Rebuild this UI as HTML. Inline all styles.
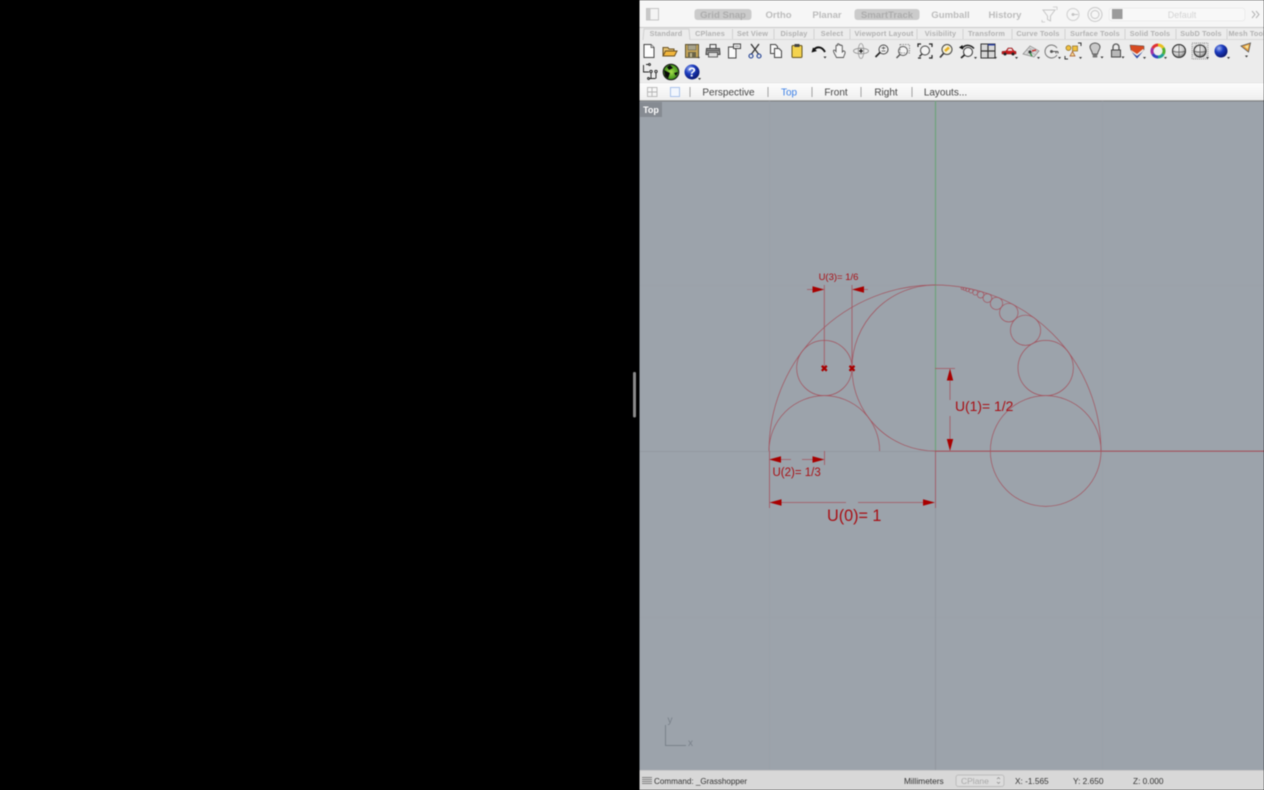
<!DOCTYPE html>
<html lang="en"><head><meta charset="utf-8"><title>Rhino Top Viewport</title>
<style>
html,body{margin:0;padding:0;width:1264px;height:790px;overflow:hidden;background:#000}
svg{position:absolute;left:0;top:0;display:block;filter:blur(.45px)}
text{font-family:"Liberation Sans",sans-serif}
.top{font-size:9.6px;font-weight:bold;fill:#bcbcbc;text-anchor:middle}
.tab{font-size:7.3px;font-weight:bold;fill:#b2b2b2;text-anchor:middle;letter-spacing:.15px}
.vt{font-size:10px;fill:#444;text-anchor:middle}
.st{font-size:8.3px;fill:#333}
.d{fill:#a80f14}
.l{stroke:#a3545f;stroke-width:.72;fill:none}
.dl{stroke:#a5545f;stroke-width:.8;fill:none}
.a{fill:#a80000}
.dd{fill:#333}
</style></head><body>
<svg width="1264" height="790" viewBox="0 0 1264 790" xmlns="http://www.w3.org/2000/svg">
<defs>
<radialGradient id="bs" cx=".35" cy=".3" r=".8"><stop offset="0" stop-color="#9fb4f0"/><stop offset=".4" stop-color="#1c3cc0"/><stop offset="1" stop-color="#071060"/></radialGradient>
<radialGradient id="gs" cx=".4" cy=".35" r=".75"><stop offset="0" stop-color="#f4f4f4"/><stop offset=".6" stop-color="#c8c8c8"/><stop offset="1" stop-color="#555"/></radialGradient>
<radialGradient id="gl" cx=".5" cy=".5" r=".6"><stop offset="0" stop-color="#a6e04a"/><stop offset=".7" stop-color="#4a9a20"/><stop offset="1" stop-color="#123a0a"/></radialGradient>
<linearGradient id="vb" x1="0" y1="0" x2="0" y2="1"><stop offset="0" stop-color="#fdfdfd"/><stop offset="1" stop-color="#eeeeee"/></linearGradient>
</defs>

<rect width="640" height="790" fill="#000"/>
<rect x="633" y="372" width="3" height="45.500" rx="1.200" fill="#8a8a8a"/>

<!-- top bar -->
<rect x="639.500" y="0" width="625" height="27" fill="#f6f6f6"/>
<rect x="639.500" y="27" width="625" height="1" fill="#c9c9c9"/>
<rect x="646.500" y="8.500" width="12" height="11.500" fill="#f4f4f4" stroke="#c4c4c4"/>
<rect x="647" y="9" width="3.500" height="10.500" fill="#c8c8c8"/>
<rect x="694.500" y="9" width="57" height="11" rx="3" fill="#cbcbcb"/>
<text class="top" x="723" y="18" style="fill:#adadad">Grid Snap</text>
<text class="top" x="778.500" y="18">Ortho</text>
<text class="top" x="827" y="18">Planar</text>
<rect x="854.500" y="9" width="65" height="11" rx="3" fill="#cbcbcb"/>
<text class="top" x="887" y="18" style="fill:#adadad">SmartTrack</text>
<text class="top" x="950.500" y="18">Gumball</text>
<text class="top" x="1005" y="18">History</text>
<path d="M1043 10h12l-4.500 6v5l-3-1.500v-3.500z" fill="none" stroke="#c6c6c6"/>
<path d="M1053 7h4v3M1042 20v2h3" fill="none" stroke="#c6c6c6" stroke-width=".8"/>
<circle cx="1073" cy="14.500" r="6" fill="none" stroke="#cfcfcf"/><circle cx="1073" cy="14.500" r="1.500" fill="#c4c4c4"/><path d="M1073 14.500h5" stroke="#c4c4c4"/>
<circle cx="1095" cy="14.500" r="7" fill="none" stroke="#c8c8c8"/><circle cx="1095" cy="14.500" r="4" fill="none" stroke="#c8c8c8"/>
<rect x="1109" y="8" width="136" height="13" rx="3" fill="#f8f8f8" stroke="#ececec"/>
<rect x="1112" y="9" width="10.500" height="10" fill="#9b9b9b"/>
<text x="1182" y="18" font-size="9" fill="#d4d4d4" text-anchor="middle">Default</text>
<path d="M1252 11l3 3.500-3 3.500M1256 11l3 3.500-3 3.500" fill="none" stroke="#b4b4b4"/>

<!-- tabs -->
<rect x="639.500" y="28" width="625" height="55" fill="#ececec"/>
<path d="M643 40l1-11h45l1 11M732.500 40v-11M774 40v-11M814 40v-11M850 40v-11M917 40v-11M963 40v-11M1012 40v-11M1065 40v-11M1125 40v-11M1176 40v-11M1227 40v-11" fill="none" stroke="#d0d0d0"/>
<path d="M690 39.500H1264" stroke="#dadada"/>
<text class="tab" x="666" y="36">Standard</text>
<text class="tab" x="710" y="36">CPlanes</text>
<text class="tab" x="752.500" y="36">Set View</text>
<text class="tab" x="794" y="36">Display</text>
<text class="tab" x="832" y="36">Select</text>
<text class="tab" x="884" y="36">Viewport Layout</text>
<text class="tab" x="940.500" y="36">Visibility</text>
<text class="tab" x="986.500" y="36">Transform</text>
<text class="tab" x="1038" y="36">Curve Tools</text>
<text class="tab" x="1095" y="36">Surface Tools</text>
<text class="tab" x="1150" y="36">Solid Tools</text>
<text class="tab" x="1201" y="36">SubD Tools</text>
<text class="tab" x="1249" y="36">Mesh Tools</text>

<!-- toolbar row 1 -->
<g transform="translate(649,51)"><path d="M-5-6.500h7l3 3V6.500H-5z" fill="#fdfdfd" stroke="#444"/><path d="M2-6.500v3h3" fill="#ddd" stroke="#444" stroke-width=".7"/></g>
<g transform="translate(670,51)"><path d="M-7 4.500V-3.500h5l1 1.500h5v2" fill="#e4c170" stroke="#6a5020"/><path d="M-7 5l2.500-5H7L4.500 5z" fill="#f2b63c" stroke="#6a5020"/></g>
<g transform="translate(692,51)"><rect x="-6.500" y="-6.500" width="13" height="13" fill="#c8a758" stroke="#5c5232"/><rect x="-4" y="-6" width="8" height="5" fill="#a8a48c" stroke="#555"  stroke-width=".5"/><rect x="-4" y="1" width="8" height="5.500" fill="#6a6448"/><rect x="-2" y="2" width="2" height="4" fill="#c0b890"/><path d="M5.500 6h2.500l-1.200 1.500z" class="dd"/></g>
<g transform="translate(713,51)"><path d="M-3-6.500h6v4h-6z" fill="#eee" stroke="#444"/><path d="M-6.500-2.500h13l.5 6h-14z" fill="#9a9a9a" stroke="#444"/><rect x="-4.500" y="1.500" width="9" height="4.500" fill="#ddd" stroke="#444" stroke-width=".8"/><path d="M-6-.5h12" stroke="#555"/></g>
<g transform="translate(734,51)"><path d="M-5.500-4h5l2.500 2.500V7h-7.500z" fill="#fafafa" stroke="#444"/><rect x="-.5" y="-7" width="7" height="4.500" fill="#fafafa" stroke="#444"/><path d="M1-4.800h4" stroke="#888"/></g>
<g transform="translate(755,51)"><path d="M-4-7L3.500 3M4-7L-3.500 3" stroke="#333" stroke-width="1.300" fill="none"/><circle cx="-4" cy="5" r="2" fill="none" stroke="#1c3c90" stroke-width="1.100"/><circle cx="4" cy="5" r="2" fill="none" stroke="#1c3c90" stroke-width="1.100"/></g>
<g transform="translate(776,51)"><path d="M-5.500-6.500h5l2 2v7h-7z" fill="#f8f8f8" stroke="#444"/><path d="M-1.500-2.500h4.500l2.500 2.500v6.500h-7z" fill="#f8f8f8" stroke="#444"/></g>
<g transform="translate(797,51)"><rect x="-5" y="-5.500" width="10" height="12" rx="1" fill="#f4d34e" stroke="#665520"/><rect x="-2.500" y="-7" width="5" height="3" fill="#444"/></g>
<g transform="translate(819,51)"><path d="M-5.500-1C-2-5 3-4.500 6 1" fill="none" stroke="#111" stroke-width="1.900"/><path d="M-7.500 1.500l1.500-5 4 3.500z" fill="#111"/><path d="M4.500 5.500h3l-1.500 2z" class="dd"/></g>
<g transform="translate(840,51)"><path d="M-3.500 6.500C-5 3-7 1-6.500-.5c.5-.8 1.500-.5 2.500 1V-5c0-1 1.500-1 1.500 0v-1.500c0-1 1.700-1 1.700 0V-5.500c0-1 1.600-1 1.600 0V-5c0-1 1.500-1 1.500 0V1c1-1 1.500-1.500 1.800-1C6.500 1 4 4 3.500 6.500z" fill="#f4f4f4" stroke="#555" stroke-width=".9"/></g>
<g transform="translate(861,51)"><ellipse rx="7.500" ry="2.800" fill="none" stroke="#888" stroke-width=".8"/><ellipse rx="2.800" ry="7.500" fill="none" stroke="#999" stroke-width=".8"/><path d="M-2 0h4M0-2v4" stroke="#222" stroke-width="1.300"/></g>
<g transform="translate(882,51)"><circle cx="1.500" cy="-1.500" r="4.500" fill="#f4f4f4" stroke="#444"/><path d="M-2 1.500-6.500 6" stroke="#222" stroke-width="1.600"/><path d="M-.5-3h4M1.500-4.500v3M-.5 0h4" stroke="#444" stroke-width=".7"/></g>
<g transform="translate(903,51)"><circle cx="0" cy="0" r="4.500" fill="#f4f4f4" stroke="#555"/><path d="M-3 3.500-6.500 7" stroke="#555" stroke-width="1.400"/><rect x="-3" y="-6.500" width="9.500" height="8.500" fill="none" stroke="#777" stroke-width=".8" stroke-dasharray="1.500 1"/></g>
<g transform="translate(925,51)"><circle cx="0" cy="-.5" r="4.500" fill="#f4f4f4" stroke="#444"/><path d="M-3 3-5.500 5.500" stroke="#333" stroke-width="1.400"/><path d="M-7-4v-3h3M4-7h3v3M7 4v3H4M-4 7h-3" fill="none" stroke="#222" stroke-width="1.200"/></g>
<g transform="translate(946,51)"><circle cx="1" cy="-1.500" r="5" fill="#f5f1d8" stroke="#444"/><path d="M-2.500 2.500-6 6.500" stroke="#333" stroke-width="1.700"/><path d="M-1 0 3-3.500" stroke="#e8b020" stroke-width="2.500"/></g>
<g transform="translate(967,51)"><circle cx="1" cy="1" r="4.500" fill="#f4f4f4" stroke="#333"/><path d="M-2.500 4-6 7" stroke="#222" stroke-width="1.700"/><path d="M-5-2C-3-6.500 3-7 7-2.500" fill="none" stroke="#222" stroke-width="1.500"/><path d="M-8-3.500-4.500-6-4-1.500z" fill="#111"/><path d="M7 6h3l-1.500 2z" class="dd"/></g>
<g transform="translate(988,51)"><rect x="-7" y="-7" width="14" height="14" fill="#d8d8d8" stroke="#333"/><path d="M0-7V7M-7 0H7" stroke="#333" stroke-width="1.200"/><rect x="0" y="-7" width="7" height="1.500" fill="#2a3fa0"/><path d="M6 6h3l-1.500 2z" class="dd"/></g>
<g transform="translate(1009,51)"><path d="M-7 3V.5L-3 0-1-3H3L5 0 7 .5V3z" fill="#c8191c" stroke="#7a1010" stroke-width=".5"/><path d="M-.5-2.200H2.500L3.500-.3H-1.500z" fill="#eee"/><circle cx="-4" cy="3" r="1.500" fill="#222"/><circle cx="4" cy="3" r="1.500" fill="#222"/><path d="M6 6h3l-1.500 2z" class="dd"/></g>
<g transform="translate(1031,51)"><path d="M-8 3-1-5 8 0 3 6z" fill="#d8d8d8" stroke="#888" stroke-width=".7"/><path d="M-4.500-1 5 4M-2-3 6.500 1M-4 3.500l4-6M-1 5 3-1.500" stroke="#999" stroke-width=".5"/><circle cx="-1" cy="1" r="1.500" fill="#333"/><path d="M1 0 5-1" stroke="#c22" stroke-width="1.300"/><path d="M-1 2l2 3" stroke="#2a8a3a" stroke-width="1.200"/><path d="M6 6h3l-1.500 2z" class="dd"/></g>
<g transform="translate(1052,51)"><path d="M5-3A6.500 6.500 0 1 0 5 4" fill="none" stroke="#777"/><circle cx="-.5" cy=".5" r="1.500" fill="#555"/><path d="M-.5 .5H6M4 .5V2.500M6 .5V2.500" stroke="#555"/><path d="M6 6h3l-1.500 2z" class="dd"/></g>
<g transform="translate(1073,51)"><rect x="-.5" y="-5" width="5" height="5" fill="#f0c040" stroke="#8a6a20" stroke-width=".7"/><circle cx="-4.500" cy="-3" r="2.500" fill="#f0c040" stroke="#8a6a20" stroke-width=".7"/><path d="M-3 5l2.500-4.500L2 5z" fill="#f4d890" stroke="#a05020" stroke-width=".7"/><path d="M5-8h3v3M-8 5v3h3" fill="none" stroke="#333"/><path d="M6 6h3l-1.500 2z" class="dd"/></g>
<g transform="translate(1095,51)"><path d="M-2.500 3C-3-.5-5-1.500-5-4a5 4 0 0 1 10 0C5-1.500 3-.5 2.500 3z" fill="#c9c9c9" stroke="#555"/><rect x="-2.300" y="3" width="4.600" height="3.500" fill="#777"/><path d="M5.500 5.500h3l-1.500 2z" class="dd"/></g>
<g transform="translate(1116,51)"><path d="M-3-1V-4a3 3 0 0 1 6 0V-1" fill="none" stroke="#555" stroke-width="1.300"/><rect x="-4.500" y="-1" width="9" height="7" fill="#b8b8b8" stroke="#444"/><path d="M5.500 5.500h3l-1.500 2z" class="dd"/></g>
<g transform="translate(1137,51)"><path d="M-7-6 7-5V-1L0 6-6-.5z" fill="#d84a20" stroke="#444" stroke-width=".5"/><path d="M-6-1 0 3 6-2 7-1 0 6-6-.5z" fill="#eee"/><path d="M-5 1.500 0 5 5.500 1 0 7.500z" fill="#2844a0"/><path d="M6 6h3l-1.500 2z" class="dd"/></g>
<g transform="translate(1158,51)" fill="none" stroke-width="3"><path d="M0-6A6 6 0 0 1 5.200-3" stroke="#e8c020"/><path d="M5.200-3A6 6 0 0 1 5.200 3" stroke="#50b030"/><path d="M5.200 3A6 6 0 0 1 0 6" stroke="#20a090"/><path d="M0 6A6 6 0 0 1-5.200 3" stroke="#3040c0"/><path d="M-5.200 3A6 6 0 0 1-5.200-3" stroke="#a030a0"/><path d="M-5.200-3A6 6 0 0 1 0-6" stroke="#e03030"/><circle r="3.800" fill="#eee" stroke="none"/><path d="M6 6h3l-1.500 2z" fill="#333" stroke="none"/></g>
<g transform="translate(1179,51)"><circle r="6.500" fill="url(#gs)" stroke="#222"/><path d="M0-6.500V6.500M-6.500 0C-3 1.500 3 1.500 6.500 0" fill="none" stroke="#555" stroke-width=".7"/></g>
<g transform="translate(1200,51)"><rect x="-8" y="-8" width="16" height="16" fill="#e2e2e2" stroke="#777" stroke-width=".7" stroke-dasharray="1 1"/><path d="M-8-4H8M-8 0H8M-8 4H8M-4-8V8M0-8V8M4-8V8" stroke="#888" stroke-width=".5" stroke-dasharray="1 1"/><circle r="6" fill="url(#gs)" stroke="#222"/><path d="M0-6V6M-6 0C-3 1.500 3 1.500 6 0" fill="none" stroke="#555" stroke-width=".7"/><path d="M6 6h3l-1.500 2z" class="dd"/></g>
<g transform="translate(1221,51)"><circle r="6.500" fill="url(#bs)"/><path d="M6 6h3l-1.500 2z" class="dd"/></g>
<g transform="translate(1246,49)"><path d="M-5-3 4.500-6 2.500 3z" fill="#e8a040" stroke="#555" stroke-width=".8"/><path d="M-1.500-2.500 2.500-4 1.800 0z" fill="#f8e8a0"/><path d="M-1 6.500h3l-1.500 2z" class="dd"/></g>

<!-- toolbar row 2 -->
<g transform="translate(650,72)" fill="none" stroke="#222" stroke-width=".9"><path d="M-6.500-7V0H-1M-4-7.500H-1M-1 6.500H5.500M1 1V6.500M6 1V6.500"/><circle cx="1" cy="-.5" r="1.200"/><circle cx="6" cy="-.5" r="1.200"/><circle cx="-.5" cy="-7.500" r="1"/><circle cx="-1.500" cy="6.500" r="1"/></g>
<g transform="translate(671,72)"><circle r="7.800" fill="url(#gl)" stroke="#111"/><path d="M-7-2-1 1-3 6.500-6 4zM-1-7l3 3-4 2-2-3zM3 1l4-1-2 4z" fill="#0a0a0a"/></g>
<g transform="translate(692,72)"><circle r="7.500" fill="url(#bs)"/><text x="0" y="4.500" font-size="13" font-weight="bold" fill="#fff" text-anchor="middle">?</text><path d="M6 6h3l-1.500 2z" class="dd"/></g>

<!-- viewport tab bar -->
<rect x="639.500" y="83" width="625" height="18" fill="url(#vb)"/>
<rect x="639.500" y="82.500" width="625" height=".7" fill="#e0e0e0"/>
<rect x="639.500" y="100.300" width="625" height="1" fill="#8e8e8e"/>
<g fill="none" stroke="#b4b4b4" stroke-width=".9"><rect x="647.500" y="87.500" width="9.500" height="9"/><path d="M652 87.500v9M647.500 92h9.500"/></g>
<rect x="670.500" y="87.500" width="9" height="9" fill="#f2f6fd" stroke="#a9c2ea"/>
<path d="M690 87v10M768 87v10M812 87v10M861 87v10M912 87v10" stroke="#8c8c8c" stroke-width=".8"/>
<text class="vt" x="728.500" y="95.500">Perspective</text>
<text class="vt" x="789" y="95.500" style="fill:#3a7fe6">Top</text>
<text class="vt" x="836" y="95.500">Front</text>
<text class="vt" x="886" y="95.500">Right</text>
<text class="vt" x="945.500" y="95.500">Layouts...</text>

<!-- viewport -->
<rect x="639.500" y="101.300" width="625" height="668.700" fill="#9ca3ab"/>
<path d="M769.500 101V770M1102.500 101V770M640 285.500H1264M640 617.500H1264" stroke="#98a0a8" stroke-width=".6"/>
<path d="M640 451.500H935" stroke="#90969e" stroke-width=".7"/>
<path d="M935.500 451V770" stroke="#8f959c" stroke-width=".8"/>
<path d="M935.500 101V451" stroke="#6fa47c" stroke-width="1.200"/>
<path d="M935 451.200H1264" stroke="#a63c48" stroke-width=".85"/>
<rect x="640" y="102" width="22" height="15" fill="#868b92"/>
<text x="651" y="113" font-size="9" font-weight="bold" fill="#fff" text-anchor="middle">Top</text>

<!-- geometry -->
<path class="l" d="M769 451A166 166 0 0 1 1101 451"/>
<path class="l" d="M935 285A83 83 0 0 0 935 451"/>
<path class="l" d="M769 451A55.330 55.330 0 0 1 879.670 451"/>
<circle class="l" cx="824.330" cy="368" r="27.670"/>
<g class="l">
<circle cx="1045.670" cy="451" r="55.330"/>
<circle cx="1045.670" cy="368" r="27.670"/>
<circle cx="1025.550" cy="330.270" r="15.090"/>
<circle cx="1008.780" cy="312.670" r="9.220"/>
<circle cx="996.480" cy="303.440" r="6.150"/>
<circle cx="987.420" cy="298.110" r="4.370"/>
<circle cx="980.570" cy="294.760" r="3.250"/>
<circle cx="975.240" cy="292.550" r="2.520"/>
<circle cx="971" cy="291" r="2"/>
<circle cx="967.550" cy="289.880" r="1.630"/>
<circle cx="964.690" cy="289.050" r="1.350"/>
<circle cx="962.290" cy="288.410" r="1.140"/>
</g>

<!-- U(3) -->
<path class="dl" d="M807 289.500H813M864 289.500H868M824.300 285V368M852 285V368"/>
<path class="a" d="M812.500 286.300 824.300 289.500 812.500 292.700zM864 286.300 852 289.500 864 292.700z"/>
<path d="M821.800 365.800l5 5M826.800 365.800l-5 5M849.500 365.800l5 5M854.500 365.800l-5 5" stroke="#a80000" stroke-width="2.200"/>
<text class="d" x="838.500" y="280" font-size="9.500" text-anchor="middle">U(3)= 1/6</text>

<!-- U(2) -->
<path class="dl" d="M781 459.500H791M802 459.500H813M824.500 451V465"/>
<path class="a" d="M769 459.500 781 456.300V462.700zM824.500 459.500 812.500 456.300V462.700z"/>
<text class="d" x="772.500" y="476" font-size="11.500">U(2)= 1/3</text>

<!-- U(0) -->
<path class="dl" d="M769.500 451V508M935.500 451V508M781 502.500H846M858 502.500H923"/>
<path class="a" d="M769.500 502.500 781.500 499.300V505.700zM935 502.500 923 499.300V505.700z"/>
<text class="d" x="827" y="521" font-size="16.200">U(0)= 1</text>

<!-- U(1) -->
<path class="dl" d="M935 368.500H955M950 380V400M950 416V439"/>
<path class="a" d="M950 368.500 946.800 380.500H953.200zM950 451 946.800 439H953.200z"/>
<text class="d" x="955" y="411" font-size="13.900">U(1)= 1/2</text>

<!-- triad -->
<path d="M665.500 725V745.500H686" fill="none" stroke="#7a828b" stroke-width="1"/>
<text x="667.500" y="723" font-size="10" fill="#79818a">y</text>
<text x="688" y="746" font-size="10" fill="#79818a">x</text>

<!-- status bar -->
<rect x="639.500" y="770" width="625" height="20" fill="#d8d8d8"/>
<rect x="639.500" y="770" width="625" height=".8" fill="#c6c6c6"/>
<path d="M642 777.500H652M642 779.500H652M642 781.500H652M642 783.500H652" stroke="#666" stroke-width=".7"/>
<text class="st" x="654" y="784" style="font-size:8.100px">Command: _Grasshopper</text>
<text class="st" x="904" y="784">Millimeters</text>
<rect x="956" y="775" width="48" height="11.500" rx="2.500" fill="#dcdcdc" stroke="#bcbcbc"/>
<text x="961" y="784" font-size="8.500" fill="#a8a8a8">CPlane</text>
<path d="M997 779l1.500-1.500 1.500 1.500M997 782l1.500 1.500 1.500-1.500" fill="none" stroke="#888" stroke-width=".7"/>
<text class="st" x="1015" y="784">X: -1.565</text>
<text class="st" x="1073" y="784">Y: 2.650</text>
<text class="st" x="1133" y="784">Z: 0.000</text>
</svg>
</body></html>
